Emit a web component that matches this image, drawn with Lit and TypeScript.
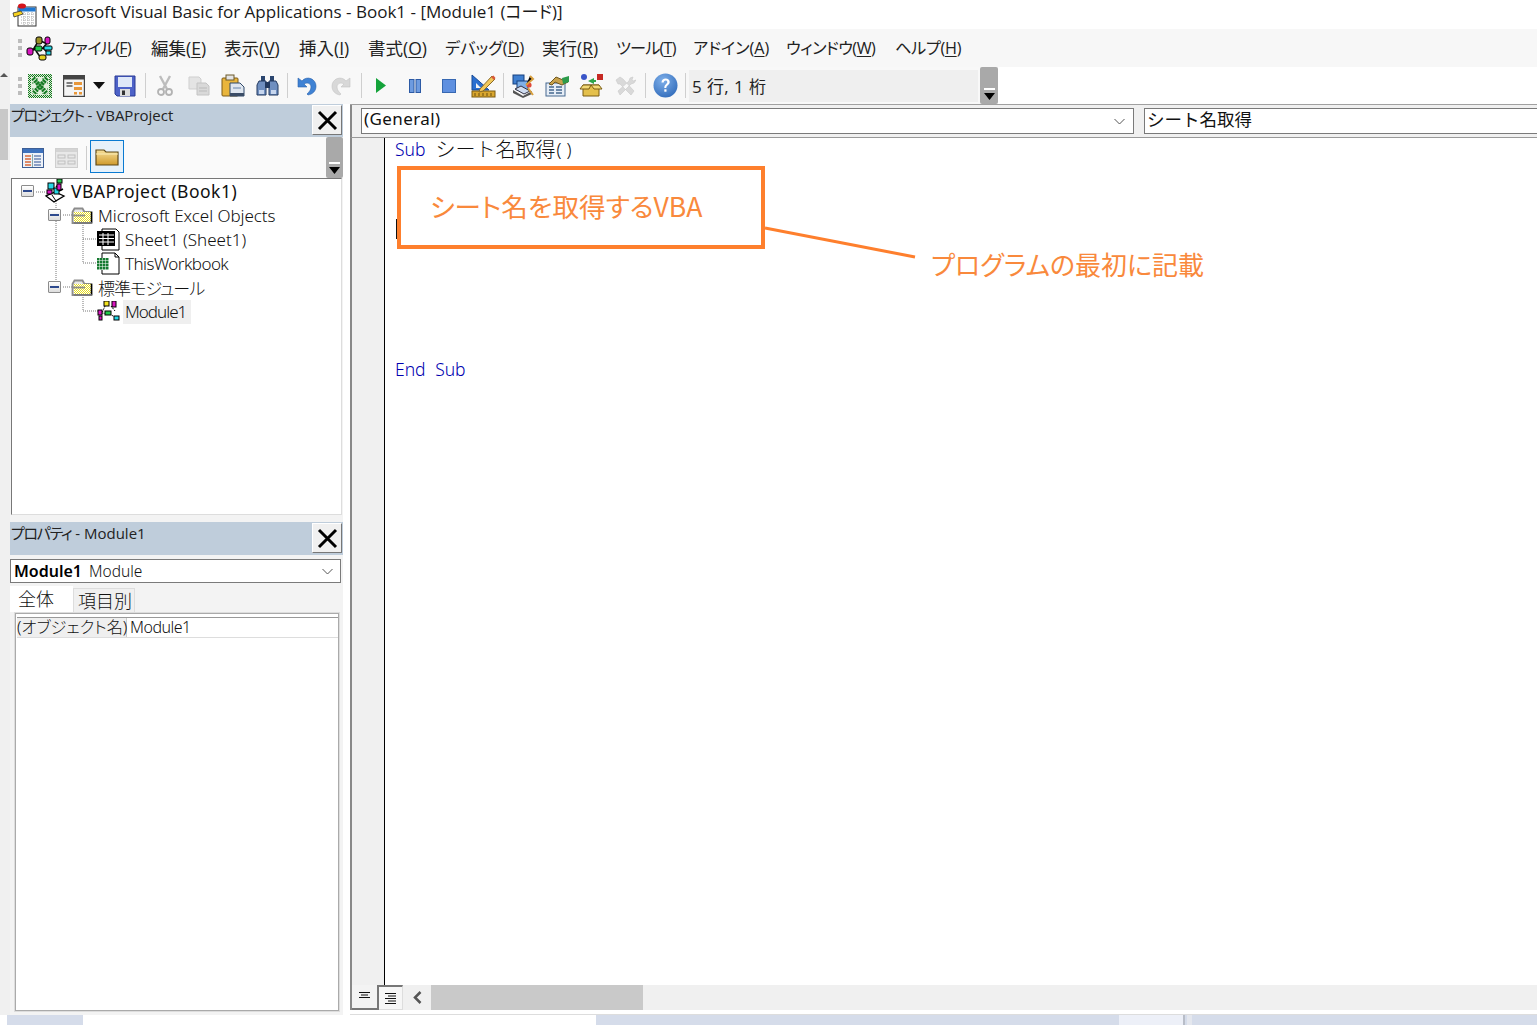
import { LitElement, html, css, TemplateResult } from "lit";
import { customElement } from "lit/decorators.js";

const ic = (w: number, h: number, body: TemplateResult) => html`<svg class="ic" width=${w} height=${h} viewBox="0 0 ${w} ${h}">${body}</svg>`;

const icons: Record<string, TemplateResult> = {
  app: ic(25, 24, html`<svg><rect x="6" y="4" width="18" height="19" fill="#fff" stroke="#333"/><rect x="6.5" y="4.5" width="17" height="4" fill="#1e78d2"/>
    <path d="M9 11h13M9 14h13M9 17h13M9 20h13M12 9v13M16 9v13M20 9v13" stroke="#aaa" stroke-dasharray="1 1"/>
    <ellipse cx="10" cy="3" rx="4" ry="2.6" fill="#d4141c"/><path d="M1 10l8-2 2 3-9 3z" fill="#f7d21e" stroke="#333" stroke-width=".8"/></svg>`),
  vbe: ic(27, 26, html`<svg><path d="M13 5L7 15M13 5l8 4M7 15l10-2M17 13l4 4M17 13l4-5M10 16l5 7" stroke="#111" stroke-width="1.6"/>
    <rect x="10" y="2" width="6" height="7" rx="2" fill="#9a8f25" stroke="#000"/><rect x="19" y="2" width="5" height="7" rx="2" fill="#d916c0" stroke="#000"/>
    <rect x="1" y="13" width="6" height="7" rx="2" fill="#d916c0" stroke="#000"/><rect x="9" y="11" width="7" height="5" rx="1.5" fill="#22c94a" stroke="#000"/>
    <rect x="18" y="11" width="8" height="4" rx="1" fill="#27d8e6" stroke="#000"/><rect x="20" y="16" width="5" height="4" fill="#27d8e6" stroke="#000"/><rect x="13" y="20" width="7" height="5" rx="2" fill="#e3d21e" stroke="#000"/></svg>`),
  excel: ic(24, 24, html`<svg><defs><pattern id="chk" width="2" height="2" patternUnits="userSpaceOnUse"><rect width="2" height="2" fill="#dcebd6"/><rect width="1" height="1" fill="#157a22"/><rect x="1" y="1" width="1" height="1" fill="#157a22"/></pattern></defs><rect x="0" y="0" width="24" height="24" fill="url(#chk)"/><rect x="3" y="3" width="18" height="18" fill="#e4f0df"/><path d="M5 4l14 16M19 4L5 20" stroke="#157a22" stroke-width="4.500" stroke-dasharray="2 1"/><path d="M4 9h16M4 15h16M9 4v16M15 4v16" stroke="#157a22" stroke-dasharray="1.500 1.500"/></svg>`),
  form: ic(22, 22, html`<svg><rect x=".5" y=".5" width="21" height="21" fill="#f4f4f4" stroke="#444" stroke-width="1.4"/><rect x="1" y="1" width="20" height="3.5" fill="#444"/><path d="M3.5 8h6M3.5 11h6" stroke="#555" stroke-width="1.5"/><rect x="11" y="7" width="8" height="3" fill="#e8973a"/><rect x="11" y="12" width="8" height="3" fill="#e8973a"/><rect x="11" y="17" width="3" height="2.5" fill="#e8973a"/><rect x="16" y="17" width="3" height="2.5" fill="#e8973a"/></svg>`),
  arrow: ic(12, 7, html`<svg><path d="M0 0h12L6 7z" fill="#111"/></svg>`),
  save: ic(22, 22, html`<svg><path d="M1 1h20v20H3l-2-2z" fill="#4d62c8" stroke="#2a3a94"/><rect x="4" y="2" width="14" height="10" fill="#dfe8f8"/><rect x="6" y="14" width="10" height="7" fill="#ddd"/><rect x="8" y="15.5" width="3" height="4.5" fill="#333"/></svg>`),
  cut: ic(16, 22, html`<svg><path d="M3 1l7 13M13 1L6 14" stroke="#bdbdbd" stroke-width="2.4"/><circle cx="4" cy="17" r="3" fill="none" stroke="#b3b3b3" stroke-width="1.8"/><circle cx="12" cy="17" r="3" fill="none" stroke="#b3b3b3" stroke-width="1.8"/></svg>`),
  copy: ic(22, 20, html`<svg><path d="M1 1h10l2 2v10H1z" fill="#e4e4e4" stroke="#cfcfcf"/><path d="M9 7h9l3 3v9H9z" fill="#d9d9d9" stroke="#c4c4c4"/><path d="M11 12h8M11 15h8" stroke="#bbb"/></svg>`),
  paste: ic(24, 23, html`<svg><rect x="1" y="4" width="16" height="18" rx="1" fill="#e9b53c" stroke="#7c5a16"/><rect x="5" y="1" width="8" height="5" fill="#e4e4e4" stroke="#6c5a2a"/><path d="M9 9h10l4 4v9H9z" fill="#dfe6ef" stroke="#314a6a"/><path d="M9 19h14v3H9z" fill="#3a4c66"/><path d="M12 14h8" stroke="#6784aa"/></svg>`),
  find: ic(23, 21, html`<svg><path d="M5 1h4v5H5zM14 1h4v5h-4z" fill="#2a466f"/><path d="M3 6h7v14H1V10zM13 6h7l2 4v10h-9z" fill="#6f8fc0" stroke="#22395f"/><rect x="9" y="7" width="5" height="6" fill="#22395f"/><rect x="3" y="15" width="5" height="4" fill="#c7d6ee"/><rect x="15" y="15" width="5" height="4" fill="#c7d6ee"/></svg>`),
  undo: ic(20, 20, html`<svg><path d="M1 2v9h9L7 8c3.500-2 7-.5 7 3 0 3-2 5-4 7l1 1c5-1 8-4 8-9C19 3 10-1 5 5z" fill="#3f82d4" stroke="#2a62ab" stroke-width=".6"/></svg>`),
  redo: ic(20, 20, html`<svg><path d="M19 2v9h-9l3-3c-3.500-2-7-.5-7 3 0 3 2 5 4 7l-1 1c-5-1-8-4-8-9C1 3 10-1 15 5z" fill="#d8d8d8" stroke="#c4c4c4" stroke-width=".6"/></svg>`),
  play: ic(10, 15, html`<svg><path d="M0 0l10 7.5L0 15z" fill="#14a33a"/></svg>`),
  pause: ic(12, 14, html`<svg><rect x=".5" y=".5" width="4.5" height="13" fill="#6d9be0" stroke="#2c5aa5"/><rect x="7" y=".5" width="4.5" height="13" fill="#6d9be0" stroke="#2c5aa5"/></svg>`),
  stop: ic(14, 14, html`<svg><rect x=".5" y=".5" width="13" height="13" fill="#5f90e0" stroke="#3768b2"/></svg>`),
  design: ic(25, 24, html`<svg><path d="M1 1l17 15H1z" fill="#2a6fd0" stroke="#174a96"/><path d="M5 9l5 5H5z" fill="#f3f3f3"/><rect x="1" y="17" width="23" height="6" fill="#d9a62e" stroke="#7a5a10"/><path d="M4 19v3M8 19v3M12 19v3M16 19v3M20 19v3" stroke="#6b4f0e"/><path d="M9 15L21 2l3 3-12 12-4 1z" fill="#f1c75a" stroke="#8a6b2a"/><path d="M20 3l3 3 1.5-2-2-2.5z" fill="#d85a3a"/></svg>`),
  project: ic(24, 24, html`<svg><path d="M2 16l10 6 9-5v3l-9 4-10-5z" fill="#555"/><rect x="2" y="1" width="11" height="9" fill="#3f7fd0" stroke="#17417e"/><rect x="6" y="7" width="11" height="9" fill="#7fb0e8" stroke="#17417e"/><path d="M4 15l9 5 6-3-9-5z" fill="#cfdcf0" stroke="#334"/><circle cx="18" cy="11" r="2.6" fill="#e04a3a"/><path d="M19 2l3 3-7 6M17 14l5 7" stroke="#d8a040" stroke-width="2"/></svg>`),
  props: ic(25, 22, html`<svg><rect x="1" y="8" width="19" height="13" fill="#e6edf6" stroke="#46688f"/><path d="M4 12h5M4 15h5M4 18h5M11 12h6M11 15h6M11 18h6" stroke="#46688f" stroke-width="1.4"/><path d="M4 9l7-7 7 3 5 2-6 3-7-3-3 3z" fill="#c9a24c" stroke="#6f5820"/><path d="M17 3l7-2v6l-6 2z" fill="#2d9b4b"/></svg>`),
  browser: ic(25, 23, html`<svg><path d="M4 11h16v11H4z" fill="#e4c04c" stroke="#7a5d12"/><path d="M4 11l-3 4h9l2-4zM20 11l3 4h-8l-3-4z" fill="#f2d976" stroke="#7a5d12"/><circle cx="5" cy="3" r="3" fill="#3a55c8"/><rect x="18" y="0" width="6" height="6" fill="#c62a24"/><path d="M9 7l6-3v2h2v2h-2v2z" fill="#2da54a"/></svg>`),
  tools: ic(21, 20, html`<svg><path d="M1 4l4-3 3 2 11 12-3 4L5 8H3zM18 1l-3 1-1 3L3 15l2 4L16 8l3-1 2-3-3 1-1-1z" fill="#d9d9d9" stroke="#cacaca" stroke-width=".6"/></svg>`),
  help: ic(25, 25, html`<svg><defs><radialGradient id="hg" cx=".4" cy=".3" r=".8"><stop offset="0" stop-color="#7fb0ea"/><stop offset="1" stop-color="#2d68b8"/></radialGradient></defs><circle cx="12.5" cy="12.5" r="12" fill="url(#hg)"/><path d="M8.5 9.5c0-2.6 2-4 4.2-4s4 1.4 4 3.6c0 3.200-3.400 3-3.400 6h-2c0-3.800 3-3.800 3-6 0-1-.7-1.700-1.700-1.700s-1.800.8-1.900 2.100z" fill="#fff"/><rect x="11.300" y="16.300" width="2.200" height="2.400" fill="#fff"/></svg>`),
  codeview: ic(22, 20, html`<svg><rect x=".5" y=".5" width="21" height="19" fill="#eef2f8" stroke="#3e5f95"/><rect x="1" y="1" width="20" height="4" fill="#3e72bd"/><path d="M3 8h6M3 11h6M3 14h6M3 17h6" stroke="#d96a3a" stroke-width="1.5"/><path d="M12 8h7M12 11h7M12 14h7M12 17h7" stroke="#6d87b5" stroke-width="1.5"/><path d="M10.500 6v13" stroke="#8aa"/></svg>`),
  objview: ic(23, 20, html`<svg><rect x=".5" y=".5" width="22" height="19" fill="#e8e8e8" stroke="#cfcfcf"/><rect x="1" y="1" width="21" height="3" fill="#d4d4d4"/><rect x="3" y="7" width="7" height="3" fill="none" stroke="#bfbfbf"/><rect x="13" y="7" width="7" height="3" fill="none" stroke="#bfbfbf"/><rect x="3" y="13" width="7" height="3" fill="none" stroke="#bfbfbf"/><rect x="13" y="13" width="7" height="3" fill="none" stroke="#bfbfbf"/></svg>`),
  folderbig: ic(24, 18, html`<svg><defs><linearGradient id="fg" x1="0" y1="0" x2="0" y2="1"><stop offset="0" stop-color="#f7e09a"/><stop offset="1" stop-color="#cf9a2c"/></linearGradient></defs><path d="M1 2h8l2 2h12v13H1z" fill="url(#fg)" stroke="#5f4a18" stroke-width="1.200"/><path d="M1 6h22" stroke="#fbeeb8"/></svg>`),
  project16: ic(23, 24, html`<svg><path d="M3 17l8 6 10-6-9-4z" fill="#fff" stroke="#000" stroke-width="1.300"/><rect x="5" y="4" width="6" height="6" fill="#27d8e6" stroke="#000"/><rect x="11" y="9" width="5" height="6" fill="#27d8e6" stroke="#000"/><path d="M13 8l3-3M16 12l4-2" stroke="#000" stroke-width="1.500"/><rect x="14" y="0" width="5" height="4" fill="#22c94a" stroke="#000"/><rect x="14" y="5" width="4" height="6" fill="#d916c0" stroke="#000"/><rect x="4" y="11" width="5" height="4" fill="#d916c0" stroke="#000"/><path d="M9 16l4 6" stroke="#000"/></svg>`),
  folder: ic(22, 17, html`<svg><defs><pattern id="yl" width="2" height="2" patternUnits="userSpaceOnUse"><rect width="2" height="2" fill="#fff"/><rect width="1" height="1" fill="#e6dc20"/><rect x="1" y="1" width="1" height="1" fill="#e6dc20"/></pattern></defs><path d="M1.500 5l2-3.500h8l2 3.500h7v11h-19z" fill="#e8e8e8" stroke="#8c8c8c" stroke-width="1.800"/><rect x="3" y="5" width="17" height="10" fill="url(#yl)"/><path d="M1 8.500h13" stroke="#8c8c8c" stroke-width="1.800"/><path d="M20.500 5v11" stroke="#000" stroke-width="1.500"/><path d="M3 16h18" stroke="#777" stroke-width="1.500"/></svg>`),
  sheet: ic(23, 23, html`<svg><path d="M5 1h14l3 3v18H5z" fill="#fff" stroke="#000"/><rect x="0" y="3" width="18" height="15" fill="#000"/><path d="M2 7h15M2 10.500h15M2 14h15" stroke="#fff"/><path d="M6 5v12M11 5v12" stroke="#fff"/></svg>`),
  book: ic(23, 23, html`<svg><defs><pattern id="gn" width="3" height="3" patternUnits="userSpaceOnUse"><rect width="3" height="3" fill="#fff"/><rect width="2.500" height="2.500" fill="#157a30"/></pattern></defs><path d="M5 1h13l4 4v17H5z" fill="#fff" stroke="#000"/><path d="M18 1v4h4" fill="none" stroke="#000"/><rect x="0" y="6" width="12" height="12" fill="url(#gn)"/></svg>`),
  module: ic(23, 20, html`<svg><path d="M8 5L5 12M14 5l4 5M5 12l8 1M13 13l6 4" stroke="#000" stroke-width="1" stroke-dasharray="1.500 1"/><rect x="7" y="0" width="5" height="5" fill="#f2e21e" stroke="#000"/><rect x="15" y="0" width="4" height="6" fill="#d916c0" stroke="#000"/><rect x="1" y="9" width="4" height="5" fill="#d916c0" stroke="#000"/><rect x="8" y="10" width="6" height="4" fill="#22c94a" stroke="#000"/><rect x="17" y="15" width="5" height="4" fill="#27d8e6" stroke="#000"/><rect x="2" y="15" width="3" height="4" fill="#d916c0" stroke="#000"/></svg>`),
};

const chevron = (w = 11) => html`<svg class="chev" width=${w} height="7" viewBox="0 0 11 7"><path d="M.5 1l5 5 5-5" fill="none" stroke="#555"/></svg>`;
const closeX = html`<svg width="21" height="21" viewBox="0 0 21 21"><path d="M2 2l17 17M19 2L2 19" stroke="#000" stroke-width="3"/></svg>`;
const grip = html`<svg width="11" height="13" viewBox="0 0 11 13"><rect width="11" height="2" fill="#fff" y="0"/><path d="M0 5h11L5.500 12z" fill="#000"/></svg>`;

// label, accelerator, slot width, text in kanji (wider) or katakana, tracking
const menu: [string, string, number, boolean, number][] = [
  ["ファイル", "F", 89, false, -.7], ["編集", "E", 73, true, 0], ["表示", "V", 75, true, 0], ["挿入", "I", 69, true, 0], ["書式", "O", 77, true, 0],
  ["デバッグ", "D", 97, false, 0], ["実行", "R", 74, true, 0], ["ツール", "T", 77, false, -.8], ["アドイン", "A", 93, false, 0], ["ウィンドウ", "W", 109, false, -.5], ["ヘルプ", "H", 70, false, -.3],
];
const bar: [string, string][] = [["excel", "w35"], ["form", "w33"], ["arrow", "w18"], ["save", "w34"], ["|", ""], ["cut", "w34"], ["copy", "w34"], ["paste", "w34"], ["find", "w34"], ["|", ""], ["undo", "w34"], ["redo", "w34"], ["|", ""], ["play", "w34"], ["pause", "w34"], ["stop", "w34"], ["design", "w34"], ["|", ""], ["project", "w34"], ["props", "w34"], ["browser", "w34"], ["tools", "w34"], ["|", ""], ["help", "w34"], ["|", ""]];
const tree: [number, string, string, boolean, boolean, number][] = [
  [0, "project16", "VBAProject (Book1)", true, false, .5],
  [1, "folder", "Microsoft Excel Objects", true, false, -.05],
  [2, "sheet", "Sheet1 (Sheet1)", false, false, 0],
  [2, "book", "ThisWorkbook", false, false, -.55],
  [1, "folder", "標準モジュール", true, false, -.9],
  [2, "module", "Module1", false, true, -1],
];

@customElement("app-root")
export class AppRoot extends LitElement {
  static styles = css`
    :host { display: block; width: 1537px; height: 1025px; overflow: hidden; position: relative; background: #fff; color: #111;
      font-family: "Open Sans", "Noto Sans CJK JP", sans-serif; font-feature-settings: "palt"; }
    .page { display: grid; grid-template-columns: 10px 1fr; height: 1015px; }
    .strip { background: #f0f0f0; display: flex; flex-direction: column; }
    .strip .up { width: 0; height: 0; margin: 73px 0 0 0; border: 4px solid transparent; border-bottom: 4px solid #555; border-top: 0; }
    .strip .thumb { width: 8px; height: 51px; background: #c8c8c8; margin-top: 32px; }
    .main { display: flex; flex-direction: column; min-width: 0; }
    .ic { display: block; flex: none; }
    .title { height: 29px; display: flex; align-items: center; gap: 4px; padding-left: 2px; font-size: 17.05px; color: #1a1a1a; white-space: nowrap; }
    .title span { margin-bottom: 8px; }
    .menu { height: 38px; background: #f7f7f7; display: flex; align-items: center; padding-left: 8px; }
    .dots { width: 4px; flex: none; display: grid; gap: 3px; }
    .dots i { width: 4px; height: 4px; background: #bdbdbd; display: block; }
    .vbe { margin: 0 9px 0 4px; }
    .items { display: flex; font-size: 16.2px; color: #222; margin-bottom: 1px; }
    .items span { white-space: nowrap; flex: none; }
    .items span.kanji { font-size: 17.5px; }
    .items u { text-underline-offset: 2px; }
    .toolbar { height: 37px; width: 988px; background: #f8f8f8; display: flex; align-items: center; padding-left: 8px; box-sizing: border-box; position: relative; }
    .toolbar .dots { margin-right: 1px; }
    .cell { display: flex; justify-content: center; align-items: center; height: 30px; flex: none; }
    .w34 { width: 34px; } .w35 { width: 34px; justify-content: flex-start; padding-left: 5px; box-sizing: border-box; } .w33 { width: 33px; } .w18 { width: 18px; }
    .sep { width: 6px; height: 25px; flex: none; display: flex; justify-content: center; }
    .sep::before { content: ""; width: 1px; background: #cfcfcf; }
    .status { flex: 1; height: 32px; margin-left: 1px; background: #efefef; display: flex; align-items: center; padding-left: 3px; font-size: 17px; letter-spacing: .4px; color: #222; }
    .grip { width: 18px; height: 37px; flex: none; background: #a9a9a9; border-radius: 2px; display: flex; flex-direction: column; justify-content: flex-end; align-items: center; padding-bottom: 3px; box-sizing: border-box; margin-left: 2px; }
    .work { flex: 1; display: grid; grid-template-columns: 333px 7px 1fr; min-height: 0; }
    .left { display: flex; flex-direction: column; background: #f3f3f3; min-height: 0; }
    .head { height: 33px; flex: none; background: #bfcddb; display: flex; justify-content: space-between; font-size: 15px; color: #222; padding-left: 1px; }
    .head span { line-height: 22px; }
    .head i { font-style: normal; letter-spacing: -1.3px; }
    .close { width: 30px; height: 30px; margin: 1px 1px 0 0; background: #f0f0f0; border: 1px solid #777; border-top-color: #fff; border-left-color: #fff; box-sizing: border-box; display: flex; align-items: center; justify-content: center; }
    .ptools { height: 41px; flex: none; background: #fafafa; display: flex; align-items: center; padding-left: 12px; position: relative; }
    .ptools .g2 { margin-left: 11px; }
    .ptools .vsep { width: 1px; height: 24px; background: #ccc; margin: 0 3px 0 8px; }
    .sel { width: 34px; height: 33px; box-sizing: border-box; background: #e6f1fa; border: 1px solid #0a7ad1; display: flex; align-items: center; justify-content: center; margin-top: -2px; }
    .ptools .grip { margin: 0 0 0 auto; height: 41px; width: 17px; }
    .tree { height: 337px; flex: none; box-sizing: border-box; margin-left: 1px; margin-right: 1px; background: #fff; border: 1px solid #777; border-right-color: #ddd; border-bottom-color: #ddd; position: relative; }
    .lines { position: absolute; left: -11px; top: -180px; pointer-events: none; }
    .row { height: 24px; display: flex; align-items: center; position: relative; white-space: nowrap; font-family: "Noto Sans", "Noto Sans CJK JP", sans-serif; font-size: 17px; font-weight: 300; color: #111; }
    .row.l0 { padding-left: 9px; font-weight: 400; font-size: 17.500px; }
    .row.l1 { padding-left: 36px; }
    .row.l2 { padding-left: 85px; }
    .exp { width: 13px; height: 12px; box-sizing: border-box; border: 1px solid #8c8c8c; border-radius: 1px; background: linear-gradient(#fff, #ddd); display: flex; align-items: center; justify-content: center; flex: none; }
    .exp::before { content: ""; width: 9px; height: 1.500px; background: #2e4a8e; }
    .l0 .exp { margin-right: 9px; } .l1 .exp { margin-right: 10px; }
    .row .ic { margin-right: 5px; }
    .l2 .ic { margin-right: 5px; }
    .lab.hl { background: #efefef; height: 24px; line-height: 24px; padding: 0 5px 0 2px; margin: 2px 0 0 -2px; }
    .gap { height: 7px; flex: none; }
    .combo { height: 24px; flex: none; margin: 4px 2px 0 0; box-sizing: border-box; border: 1px solid #7a7a7a; background: #fff; display: flex; align-items: center; justify-content: space-between; padding: 0 7px 0 3px; font-family: "Noto Sans", sans-serif; font-size: 15.500px; }
    .combo b { font-weight: 600; font-size: 16px; margin-right: 7px; color: #000; }
    .combo span { font-weight: 300; }
    .tabs { display: flex; height: 26px; flex: none; margin-top: 3px; font-size: 18px; font-weight: 300; font-family: "Noto Sans CJK JP", sans-serif; }
    .tab { width: 63px; background: #fff; height: 26px; line-height: 24px; padding-left: 8px; box-sizing: border-box; }
    .tab.off { width: 62px; padding-left: 4px; background: #f0f0f0; border: 1px solid #ddd; border-bottom: 0; margin-top: 2px; height: 24px; line-height: 22px; }
    .grid { flex: 1; margin: 1px 4px 4px 5px; box-sizing: border-box; background: #fff; border: 1px solid #aaa; outline: 1px solid #ddd; padding: 3px 0 0 1px; min-height: 0; }
    .grow { display: flex; height: 21px; border-top: 1px solid #999; border-bottom: 1px solid #ddd; box-sizing: border-box; font-family: "Noto Sans", "Noto Sans CJK JP", sans-serif; font-weight: 300; font-size: 16px; line-height: 19px; }
    .grow .k { width: 110px; background: #efefef; border-right: 1px solid #ccc; box-sizing: border-box; white-space: nowrap; font-size: 16.200px; }
    .grow .v { padding-left: 3px; letter-spacing: -.5px; }
    .gutter { background: #fff; }
    .right { display: flex; flex-direction: column; min-width: 0; min-height: 0; border-top: 1px solid #a0a0a0; background: #f0f0f0; }
    .combos { height: 32px; flex: none; display: flex; gap: 10px; padding: 3px 0 0 9px; box-sizing: border-box; background: #f0f0f0; border-left: 2px solid #888; }
    .cb { height: 26px; box-sizing: border-box; background: #fff; border: 1px solid #7a7a7a; font-family: "Noto Sans", "Noto Sans CJK JP", sans-serif; font-size: 17px; line-height: 22px; padding-left: 2px; display: flex; align-items: center; justify-content: space-between; }
    .cb span { margin-bottom: 5px; }
    .cb.a { width: 773px; padding-right: 8px; font-weight: 400; letter-spacing: .4px; }
    .cb.b { flex: 1; border-right: 0; font-family: "Noto Sans CJK JP", sans-serif; font-size: 17.500px; font-weight: 400; font-feature-settings: normal; }
    .codewrap { flex: 1; display: grid; grid-template-columns: 33px 1fr; min-height: 0; background: #fff; border-left: 2px solid #888; border-top: 1px solid #999; }
    .margin { background: #f0f0f0; border-right: 1px solid #000; }
    .code { padding: 1px 0 0 10px; font-family: "Noto Sans CJK JP", sans-serif; font-weight: 300; font-size: 20px; color: #111; font-feature-settings: normal; }
    .line { height: 20px; line-height: 20px; white-space: nowrap; display: flex; align-items: center; }
    .kw { color: #0000b0; font-family: "Noto Sans", sans-serif; font-size: 17.500px; font-weight: 300; word-spacing: 5px; margin-right: 10px; }
    .par { font-family: "Noto Sans", sans-serif; font-size: 18px; letter-spacing: 5px; margin-left: 1px; }
    .caret { width: 2px; height: 20px; background: #111; margin-left: 1px; }
    .hscroll { height: 25px; flex: none; display: flex; align-items: stretch; background: #f0f0f0; border-left: 2px solid #888; }
    .split { width: 27px; box-sizing: border-box; border-right: 2px solid #777; border-bottom: 2px solid #777; display: flex; align-items: center; justify-content: center; background: #f3f3f3; padding-bottom: 4px; }
    .split2 { width: 24px; box-sizing: border-box; border-top: 2px solid #777; border-right: 1px solid #ddd; border-bottom: 1px solid #ddd; display: flex; align-items: center; justify-content: center; background: #f6f6f6; }
    .leftbtn { width: 28px; display: flex; align-items: center; justify-content: center; }
    .hthumb { width: 212px; background: #c9c9c9; }
    .under { height: 4px; flex: none; border-bottom: 1px solid #ddd; background: #fff; }
    .taskbar { height: 10px; background: #d5dcea; display: flex; margin-left: 7px; }
    .taskbar .w { width: 513px; background: #fff; margin-left: 76px; }
    .taskbar .l { width: 64px; background: #edf0f8; margin-left: 523px; border-right: 2px solid #b8bdc8; }
    .taskbar .m { width: 5px; background: #e4e7ee; margin-left: 2px; }
    .note { position: absolute; left: 397px; top: 166px; width: 368px; height: 83px; box-sizing: border-box; border: 4px solid #fe7f2d; display: flex; align-items: center; padding: 0 0 5px 29px; font-family: "Noto Sans CJK JP", sans-serif; font-size: 26.600px; color: #f9893c; white-space: nowrap; font-weight: 400; }
    .wire { position: absolute; left: 760px; top: 220px; }
    .note2 { position: absolute; left: 931px; top: 245px; font-family: "Noto Sans CJK JP", sans-serif; font-size: 26px; line-height: 38px; color: #f9893c; white-space: nowrap; }
  `;

  private dots(n: number) { return html`<div class="dots">${Array.from({ length: n }, () => html`<i></i>`)}</div>`; }

  render() {
    return html`
      <div class="page">
        <div class="strip"><div class="up"></div><div class="thumb"></div></div>
        <div class="main">
          <div class="title">${icons.app}<span>Microsoft Visual Basic for Applications - Book1 - [Module1 (コード)]</span></div>
          <div class="menu">${this.dots(3)}<div class="vbe">${icons.vbe}</div>
            <div class="items">${menu.map(([t, k, w, kj, ls]) => html`<span class=${kj ? "kanji" : ""} style="width:${w}px;letter-spacing:${ls}px">${t}(<u>${k}</u>)</span>`)}</div></div>
          <div class="toolbar">${this.dots(3)}
            ${bar.map(([n, w]) => n === "|" ? html`<div class="sep"></div>` : html`<div class="cell ${w}">${icons[n]}</div>`)}
            <div class="status">5 行, 1 桁</div>
            <div class="grip">${grip}</div>
          </div>
          <div class="work">
            <div class="left">
              <div class="head"><span><i>プロジェクト</i> - VBAProject</span><div class="close">${closeX}</div></div>
              <div class="ptools">${icons.codeview}<div class="g2">${icons.objview}</div><div class="vsep"></div>
                <div class="sel">${icons.folderbig}</div><div class="grip">${grip}</div></div>
              <div class="tree">
                <svg class="lines" width="120" height="340" viewBox="0 0 120 340"><path d="M35 193h9M55 202v86M62 216h10M62 288h10M82 226v38M82 240h15M82 264h15M82 298v14M82 312h15" fill="none" stroke="#777" stroke-dasharray="1 1"/></svg>
                ${tree.map(([l, ic, t, ex, hl, ls]) => html`<div class="row l${l}" style="letter-spacing:${ls}px">${ex ? html`<div class="exp"></div>` : ""}${icons[ic]}<span class="lab ${hl ? "hl" : ""}">${t}</span></div>`)}
              </div>
              <div class="gap"></div>
              <div class="head"><span><i>プロパティ</i> - Module1</span><div class="close">${closeX}</div></div>
              <div class="combo"><div><b>Module1</b><span>Module</span></div>${chevron()}</div>
              <div class="tabs"><div class="tab">全体</div><div class="tab off">項目別</div></div>
              <div class="grid"><div class="grow"><div class="k">(オブジェクト名)</div><div class="v">Module1</div></div></div>
            </div>
            <div class="gutter"></div>
            <div class="right">
              <div class="combos">
                <div class="cb a"><span>(General)</span>${chevron()}</div>
                <div class="cb b"><span>シート名取得</span></div>
              </div>
              <div class="codewrap">
                <div class="margin"></div>
                <div class="code">
                  <div class="line"><span class="kw">Sub</span><span>シート名取得</span><span class="par">()</span></div>
                  <div class="line"></div><div class="line"></div><div class="line"></div>
                  <div class="line"><div class="caret"></div></div>
                  <div class="line"></div><div class="line"></div><div class="line"></div><div class="line"></div><div class="line"></div><div class="line"></div>
                  <div class="line"><span class="kw">End Sub</span></div>
                </div>
              </div>
              <div class="hscroll">
                <div class="split"><svg width="11" height="6" viewBox="0 0 11 6"><path d="M0 .5h11M2 3h7M0 5.500h11" stroke="#111"/></svg></div>
                <div class="split2"><svg width="11" height="11" viewBox="0 0 11 11"><path d="M0 .5h11M3 3h8M0 5.500h11M3 8h8M0 10.500h11" stroke="#111"/></svg></div>
                <div class="leftbtn"><svg width="9" height="13" viewBox="0 0 9 13"><path d="M7.500 1L2 6.500 7.500 12" fill="none" stroke="#555" stroke-width="2.500"/></svg></div>
                <div class="hthumb"></div>
              </div>
              <div class="under"></div>
            </div>
          </div>
        </div>
      </div>
      <div class="taskbar"><div class="w"></div><div class="l"></div><div class="m"></div></div>
      <div class="note">シート名を取得するVBA</div>
      <svg class="wire" width="160" height="42" viewBox="0 0 160 42"><path d="M5 8L155 37" stroke="#fe7f2d" stroke-width="3"/></svg>
      <div class="note2">プログラムの最初に記載</div>
    `;
  }
}
